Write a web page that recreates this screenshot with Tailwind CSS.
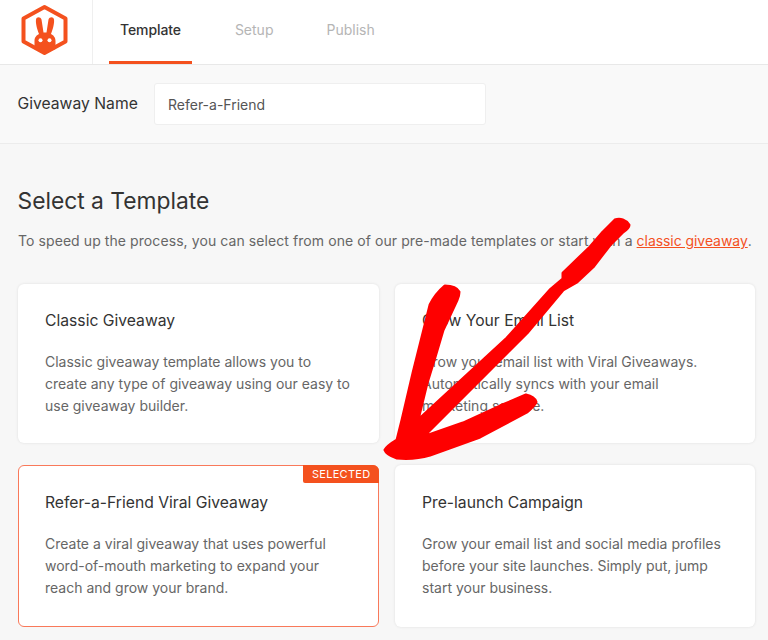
<!DOCTYPE html>
<html lang="en">
<head>
  <meta charset="UTF-8">
  <meta name="viewport" content="width=device-width, initial-scale=1.0">
  <title>Select a Template</title>
  <script src="https://cdn.jsdelivr.net/npm/@tailwindcss/browser@4"></script>
</head>
<body class="relative w-[768px] h-[640px] overflow-hidden bg-[#f7f7f7] font-['Inter',sans-serif] text-[#333]">
  <!-- Top tabs -->
  <header class="flex h-[65px] bg-white border-b border-[#e8e8e8]">
    <div class="flex w-[93px] shrink-0 items-center justify-center border-r border-[#efefef] pr-[5px] pb-[4px]">
      <svg width="47" height="50" viewBox="0 0 47 50" class="overflow-visible">
        <path d="M24.5 2 L45.500 13.500 V36.500 L24.500 48 L3.500 36.500 V13.500 Z" fill="none" stroke="#f4511e" stroke-width="4" stroke-linejoin="round"/>
        <path d="M14.500 44 V36 C14.500 32 17 30 19 29 C17 24 15.500 18 16 14.500 C16.500 11.500 20.500 11.500 21.500 14.500 L23.500 27.500 H26.500 L28.500 14.500 C29.500 11.500 33.500 11.500 34 14.500 C34.500 18 33 24 31 29 C33 30 35.500 32 35.500 36 V44 L25 48 Z" fill="#f4511e"/>
        <circle cx="20.500" cy="35.300" r="2" fill="#fff"/>
        <circle cx="29.500" cy="35.300" r="2" fill="#fff"/>
      </svg>
    </div>
    <nav class="flex ml-[16px] text-[14px] leading-[20px]">
      <a class="flex items-center px-[11px] h-[64px] border-b-[3px] border-[#f4511e] pb-[1px] text-[#333] font-medium tracking-[-0.1px]">Template</a>
      <a class="flex items-center ml-[32px] px-[11px] h-[64px] pb-[4px] text-[#b5b5b5]">Setup</a>
      <a class="flex items-center ml-[31px] px-[11px] h-[64px] pb-[4px] text-[#b5b5b5]">Publish</a>
    </nav>
  </header>

  <!-- Giveaway name -->
  <div class="flex items-center h-[79px] pl-[17.5px] bg-[#f9f9f9] border-b border-[#ececec]">
    <label class="w-[136.5px] text-[15.7px] text-[#333]">Giveaway Name</label>
    <div class="flex items-center w-[332px] h-[42px] pl-[13px] bg-white border border-[#efefef] rounded-[3px] text-[14px] text-[#555]">Refer-a-Friend</div>
  </div>

  <main class="px-[18px]">
    <h1 class="mt-[40px] -ml-[0.5px] text-[22.8px] leading-[34px] text-[#333]">Select a Template</h1>
    <p class="mt-[12px] text-[14px] leading-[22px] tracking-[0.08px] text-[#666] whitespace-nowrap">To speed up the process, you can select from one of our pre-made templates or start with a <a class="text-[#f4511e] underline tracking-[-0.06px]">classic giveaway</a>.</p>

    <div class="grid grid-cols-[361px_360px] gap-x-[16px] gap-y-[22px] mt-[32px]">
      <div class="h-[159px] px-[27px] pt-[26px] bg-white rounded-[6px] shadow-[0_0_3px_rgba(0,0,0,0.1)]">
        <h2 class="text-[15.7px] leading-[22px] text-[#333]">Classic Giveaway</h2>
        <p class="mt-[19px] text-[14px] leading-[22px] text-[#666]">Classic giveaway template allows you to create any type of giveaway using our easy to use giveaway builder.</p>
      </div>
      <div class="h-[159px] px-[27px] pt-[26px] bg-white rounded-[6px] shadow-[0_0_3px_rgba(0,0,0,0.1)]">
        <h2 class="text-[15.7px] leading-[22px] text-[#333]">Grow Your Email List</h2>
        <p class="mt-[19px] text-[14px] leading-[22px] text-[#666]">Grow your email list with Viral Giveaways. Automatically syncs with your email marketing service.</p>
      </div>
      <div class="relative h-[162px] px-[26px] pt-[26px] bg-white rounded-[6px] border border-[#f9795a]">
        <span class="absolute -top-px -right-px h-[18px] px-[8.5px] bg-[#f4511e] rounded-tr-[6px] rounded-bl-[2px] text-[11px] leading-[18px] tracking-[0.3px] text-white">SELECTED</span>
        <h2 class="text-[15.7px] leading-[22px] text-[#333]">Refer-a-Friend Viral Giveaway</h2>
        <p class="mt-[19px] text-[14px] leading-[22px] text-[#666]">Create a viral giveaway that uses powerful word-of-mouth marketing to expand your reach and grow your brand.</p>
      </div>
      <div class="h-[162px] px-[27px] pt-[27px] bg-white rounded-[6px] shadow-[0_0_3px_rgba(0,0,0,0.1)]">
        <h2 class="text-[15.7px] leading-[22px] text-[#333]">Pre-launch Campaign</h2>
        <p class="mt-[19px] text-[14px] leading-[22px] text-[#666]">Grow your email list and social media profiles before your site launches. Simply put, jump start your business.</p>
      </div>
    </div>
  </main>

  <!-- Red arrow drawn over the page, viewBox is in page pixels -->
  <svg class="absolute left-[370px] top-[200px]" width="398" height="270" viewBox="370 200 398 270">
    <path fill="#fe0000" stroke="#fe0000" stroke-width="3" stroke-linejoin="round" d="M603 232 L615 220 C620 218 626 220 629 225 C629 228 626 230 623 232 L610 245 L593 267 L577 282 L563 290 L527 333 L483 377 L423 437 L463 423 L500 406 L526 395 C531 396 535 399 536 402 C534 406 530 409 527 412 L480 437 L430 455 C420 458 408 459 397 458 C391 456 386 453 385 450 C387 446 392 443 397 440 L402 420 L413 373 L425 325 L430 305 C434 297 439 291 445 286 C451 286 457 288 459 292 C459 295 458 298 457 300 L443 330 L435 357 L427 383 L418 420 L507 338 L550 290 L563 279 L563 273 L590 247 Z"/>
  </svg>
</body>
</html>
